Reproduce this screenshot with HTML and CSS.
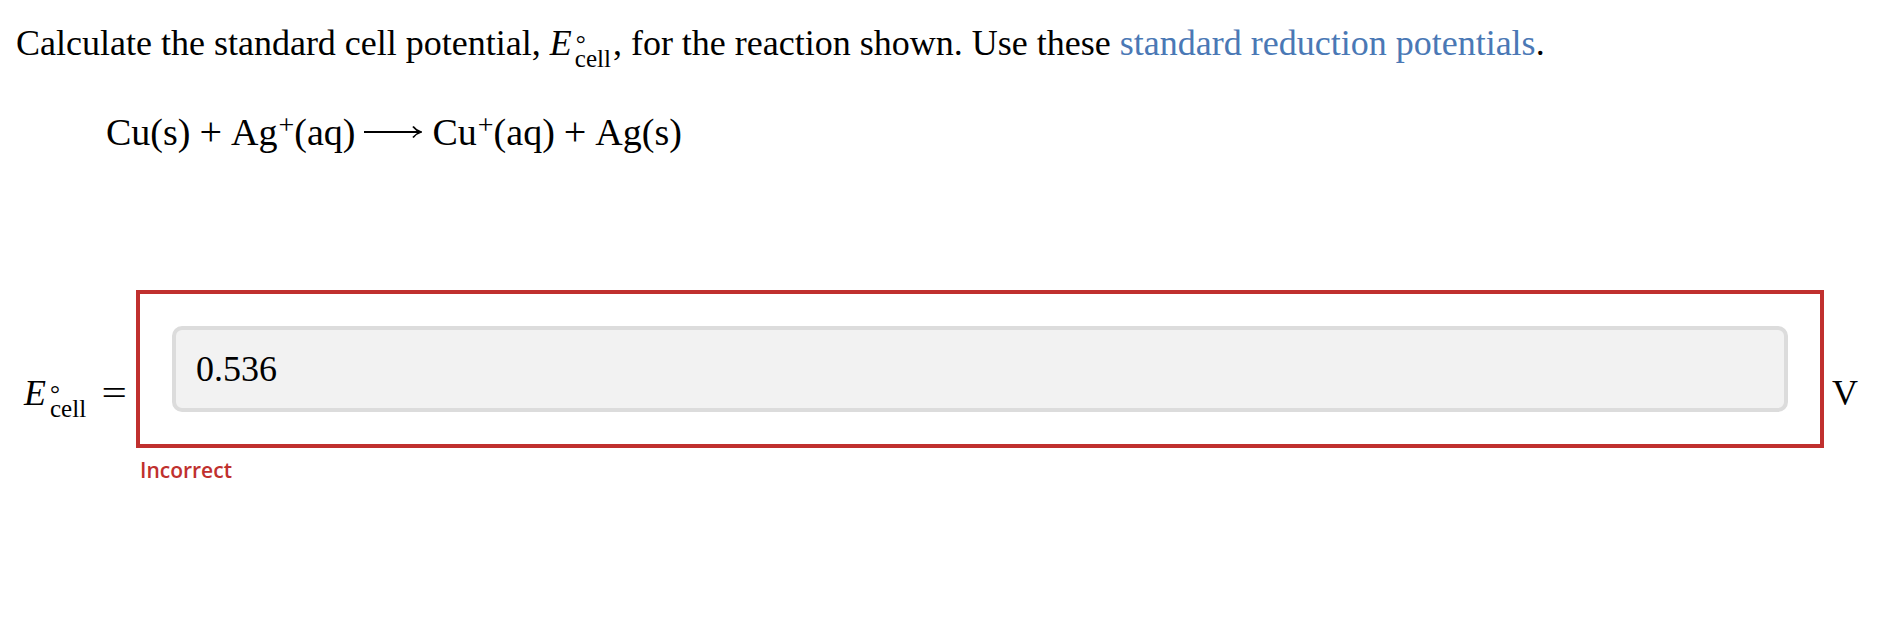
FILE: index.html
```html
<!DOCTYPE html>
<html lang="en">
<head>
<meta charset="utf-8">
<title>Standard cell potential</title>
<link rel="stylesheet" href="styles.css">
</head>
<body>
<div class="question">
  <p class="prompt">Calculate the standard cell potential, <span class="math"><i class="var">E</i><span class="deg">°</span><span class="sub">cell</span></span>, for the reaction shown. Use these <a class="link" href="#">standard reduction potentials</a>.</p>

  <div class="equation">
    <span>Cu(s)</span><span class="op">+</span><span>Ag</span><span class="sup">+</span><span>(aq)</span><span class="arrow"><svg width="58" height="14" viewBox="0 0 58 14"><line x1="0" y1="7" x2="55" y2="7" stroke="#000" stroke-width="1.8"/><path d="M49 1.5 Q52 5.5 57 7 Q52 8.5 49 12.5" fill="none" stroke="#000" stroke-width="1.8"/></svg></span><span>Cu</span><span class="sup">+</span><span>(aq)</span><span class="op">+</span><span>Ag(s)</span>
  </div>

  <div class="answer-row">
    <div class="label"><i class="var">E</i><span class="deg">°</span><span class="sub">cell</span><span class="equals">=</span></div>
    <div class="answer">
      <div class="answer-box">
        <input class="answer-input" type="text" value="0.536" readonly>
      </div>
      <div class="feedback">Incorrect</div>
    </div>
    <div class="unit">V</div>
  </div>
</div>
</body>
</html>
```

FILE: styles.css
```css
html, body {
  margin: 0;
  padding: 0;
  background: #ffffff;
}

body {
  font-family: "Liberation Serif", "Times New Roman", serif;
  font-size: 36px;
  color: #000000;
}

.prompt {
  margin: 0;
  padding: 23px 0 0 16px;
  line-height: 40px;
}

.var {
  font-style: italic;
}

.deg {
  font-size: 25px;
  line-height: 0;
  vertical-align: 3px;
  margin-left: 4px;
}

.sub {
  font-size: 25px;
  line-height: 0;
  vertical-align: -12px;
  margin-left: -11px;
  margin-right: 2px;
}

.link {
  color: #4a78b5;
  text-decoration: none;
}

.equation {
  margin-top: 49px;
  padding-left: 106px;
  font-size: 38px;
  line-height: 40px;
  white-space: nowrap;
}

.equation .op {
  font-size: 40px;
  line-height: 0;
  margin: 0 9px;
}

.equation .sup {
  font-size: 28px;
  line-height: 0;
  vertical-align: 11px;
  margin-left: 1px;
}

.equation .arrow {
  display: inline-block;
  margin: 0 10px 0 9px;
  line-height: 0;
  vertical-align: 6px;
}

.answer-row {
  display: flex;
  align-items: center;
  margin-top: 138px;
  padding: 0 24px;
}

.label {
  width: 104px;
  flex: none;
  padding-top: 10px;
  line-height: 40px;
  white-space: nowrap;
}

.label .deg {
  margin-left: 4px;
}

.label .sub {
  margin-left: -10px;
  margin-right: 0;
}

.equals {
  display: inline-block;
  margin-left: 18px;
  transform: scaleX(1.25);
}

.answer {
  flex: 1;
  margin-left: 8px;
}

.answer-box {
  border: 4px solid #c0302e;
  padding: 32px;
}

.answer-input {
  display: block;
  box-sizing: border-box;
  width: 100%;
  height: 86px;
  margin: 0;
  padding: 0 20px;
  border: 4px solid #dcdcdc;
  border-radius: 10px;
  background: #f2f2f2;
  font-family: "Liberation Serif", "Times New Roman", serif;
  font-size: 36px;
  color: #000000;
  outline: none;
}

.feedback {
  margin-top: 7px;
  padding-left: 4px;
  font-family: "Open Sans", "Noto Sans", sans-serif;
  font-weight: 600;
  font-size: 21px;
  line-height: 30px;
  color: #c0302e;
}

.unit {
  flex: none;
  margin-left: 8px;
  padding-top: 10px;
  line-height: 40px;
}
```
